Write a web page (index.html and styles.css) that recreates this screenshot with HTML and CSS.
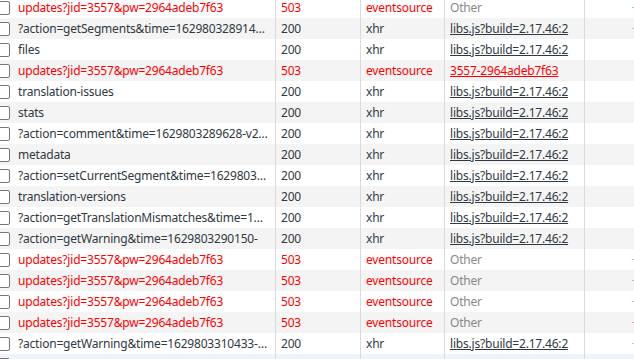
FILE: index.html
```html
<!DOCTYPE html>
<html>
<head>
<meta charset="utf-8">
<link rel="stylesheet" href="styles.css">
</head>
<body>
<div class="grid">
  <div class="row err"><div class="c name"><span class="cb"></span><span class="t">updates?jid=3557&amp;pw=2964adeb7f63</span></div><div class="c st">503</div><div class="c ty">eventsource</div><div class="c in other">Other</div><div class="c wf"><span class="tick pink"></span></div></div>
  <div class="row alt"><div class="c name"><span class="cb"></span><span class="t">?action=getSegments&amp;time=162980328914…</span></div><div class="c st">200</div><div class="c ty">xhr</div><div class="c in"><span class="lnk">libs.js?build=2.17.46:2</span></div><div class="c wf"><span class="tick grey"></span></div></div>
  <div class="row"><div class="c name"><span class="cb"></span><span class="t">files</span></div><div class="c st">200</div><div class="c ty">xhr</div><div class="c in"><span class="lnk">libs.js?build=2.17.46:2</span></div><div class="c wf"></div></div>
  <div class="row alt err"><div class="c name"><span class="cb"></span><span class="t">updates?jid=3557&amp;pw=2964adeb7f63</span></div><div class="c st">503</div><div class="c ty">eventsource</div><div class="c in"><span class="lnk">3557-2964adeb7f63</span></div><div class="c wf"></div></div>
  <div class="row"><div class="c name"><span class="cb"></span><span class="t">translation-issues</span></div><div class="c st">200</div><div class="c ty">xhr</div><div class="c in"><span class="lnk">libs.js?build=2.17.46:2</span></div><div class="c wf"></div></div>
  <div class="row alt"><div class="c name"><span class="cb"></span><span class="t">stats</span></div><div class="c st">200</div><div class="c ty">xhr</div><div class="c in"><span class="lnk">libs.js?build=2.17.46:2</span></div><div class="c wf"></div></div>
  <div class="row"><div class="c name"><span class="cb"></span><span class="t">?action=comment&amp;time=1629803289628-v2…</span></div><div class="c st">200</div><div class="c ty">xhr</div><div class="c in"><span class="lnk">libs.js?build=2.17.46:2</span></div><div class="c wf"></div></div>
  <div class="row alt"><div class="c name"><span class="cb"></span><span class="t">metadata</span></div><div class="c st">200</div><div class="c ty">xhr</div><div class="c in"><span class="lnk">libs.js?build=2.17.46:2</span></div><div class="c wf"></div></div>
  <div class="row"><div class="c name"><span class="cb"></span><span class="t">?action=setCurrentSegment&amp;time=1629803…</span></div><div class="c st">200</div><div class="c ty">xhr</div><div class="c in"><span class="lnk">libs.js?build=2.17.46:2</span></div><div class="c wf"></div></div>
  <div class="row alt"><div class="c name"><span class="cb"></span><span class="t">translation-versions</span></div><div class="c st">200</div><div class="c ty">xhr</div><div class="c in"><span class="lnk">libs.js?build=2.17.46:2</span></div><div class="c wf"></div></div>
  <div class="row"><div class="c name"><span class="cb"></span><span class="t">?action=getTranslationMismatches&amp;time=1…</span></div><div class="c st">200</div><div class="c ty">xhr</div><div class="c in"><span class="lnk">libs.js?build=2.17.46:2</span></div><div class="c wf"></div></div>
  <div class="row alt"><div class="c name"><span class="cb"></span><span class="t">?action=getWarning&amp;time=1629803290150-</span></div><div class="c st">200</div><div class="c ty">xhr</div><div class="c in"><span class="lnk">libs.js?build=2.17.46:2</span></div><div class="c wf"></div></div>
  <div class="row err"><div class="c name"><span class="cb"></span><span class="t">updates?jid=3557&amp;pw=2964adeb7f63</span></div><div class="c st">503</div><div class="c ty">eventsource</div><div class="c in other">Other</div><div class="c wf"><span class="tick pink"></span></div></div>
  <div class="row alt err"><div class="c name"><span class="cb"></span><span class="t">updates?jid=3557&amp;pw=2964adeb7f63</span></div><div class="c st">503</div><div class="c ty">eventsource</div><div class="c in other">Other</div><div class="c wf"><span class="tick pink"></span></div></div>
  <div class="row err"><div class="c name"><span class="cb"></span><span class="t">updates?jid=3557&amp;pw=2964adeb7f63</span></div><div class="c st">503</div><div class="c ty">eventsource</div><div class="c in other">Other</div><div class="c wf"><span class="tick pink"></span></div></div>
  <div class="row alt err"><div class="c name"><span class="cb"></span><span class="t">updates?jid=3557&amp;pw=2964adeb7f63</span></div><div class="c st">503</div><div class="c ty">eventsource</div><div class="c in other">Other</div><div class="c wf"><span class="tick pink"></span></div></div>
  <div class="row"><div class="c name"><span class="cb"></span><span class="t">?action=getWarning&amp;time=1629803310433-…</span></div><div class="c st">200</div><div class="c ty">xhr</div><div class="c in"><span class="lnk">libs.js?build=2.17.46:2</span></div><div class="c wf"><span class="tick grey"></span></div></div>
  <div class="row sel err"><div class="c name"><span class="cb"></span><span class="t">updates?jid=3557&amp;pw=2964adeb7f63</span></div><div class="c st">503</div><div class="c ty">eventsource</div><div class="c in other">Other</div><div class="c wf"></div></div>
</div>
</body>
</html>
```

FILE: styles.css
```css
html, body {
  margin: 0;
  padding: 0;
  background: #fff;
  overflow: hidden;
  height: 359px;
}

.grid {
  margin-top: -3px;
  font-family: "Noto Sans", "Open Sans", sans-serif;
  font-size: 12px;
  letter-spacing: -0.2px;
  color: #303942;
}

.row {
  display: grid;
  grid-template-columns: 275px 85px 84px 140px 1fr;
  height: 21px;
  line-height: 21px;
  background: #fff;
}

.row.alt { background: #f4f4f4; }
.row.sel { background: #eef3fc; }

.c {
  overflow: hidden;
  white-space: nowrap;
  text-overflow: ellipsis;
  border-left: 1px solid #dadada;
  padding-left: 5px;
  padding-right: 4px;
}

.name {
  border-left: none;
  padding-left: 0;
  padding-right: 5px;
  display: flex;
  align-items: center;
  gap: 8px;
}

.name .t {
  overflow: hidden;
  text-overflow: ellipsis;
  white-space: nowrap;
  min-width: 0;
}

.cb {
  flex: none;
  width: 12px;
  height: 12px;
  margin-left: -4px;
  border: 1px solid #767676;
  border-radius: 2px;
  background: #fff;
}

.err .t, .err .st, .err .ty { color: #f00; }
.err .lnk { color: #f00; }

.other { color: #888; }

.lnk {
  text-decoration: underline;
  color: #303942;
}

.wf {
  display: flex;
  align-items: center;
  justify-content: flex-end;
  padding-right: 0;
}

.tick {
  width: 2px;
  height: 1px;
}
.tick.pink { background: #f2a0b8; }
.tick.grey { background: #c8c8c8; }
```
